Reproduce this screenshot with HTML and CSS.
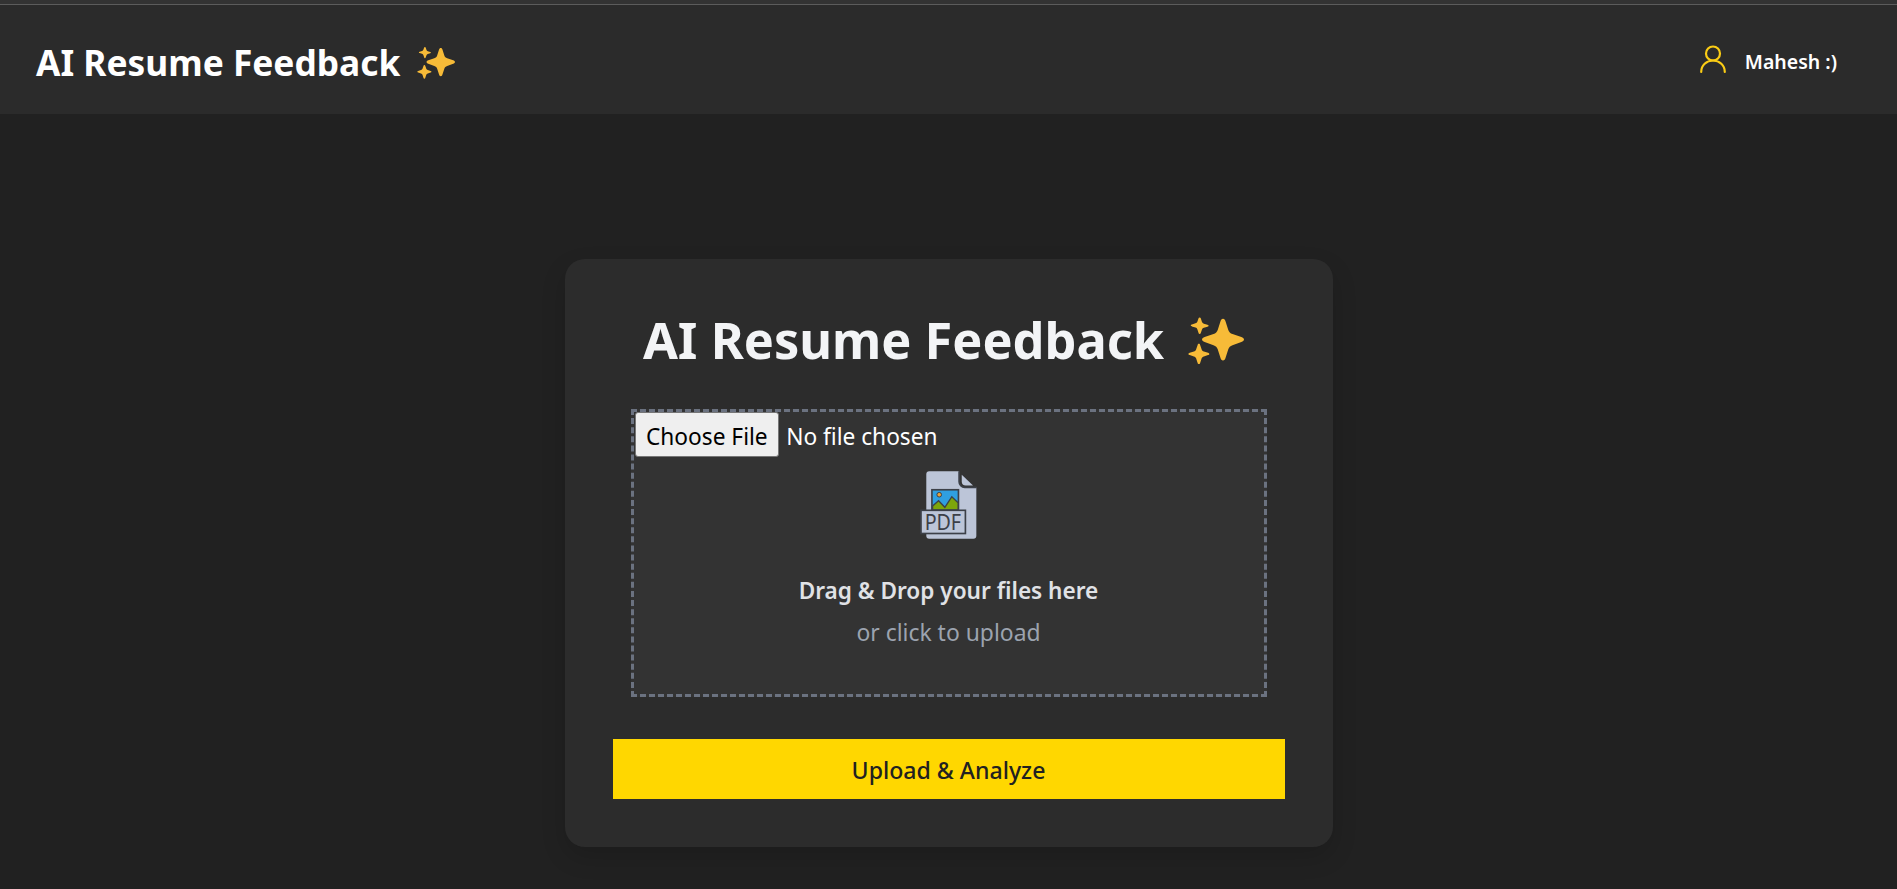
FILE: index.html
```html
<!DOCTYPE html>
<html lang="en">
<head>
  <meta charset="UTF-8" />
  <title>AI Resume Feedback</title>
  <link rel="stylesheet" href="styles.css">
</head>
<body>
  <div class="top-strip"></div>

  <nav class="navbar">
    <div class="brand">
      <span>AI Resume Feedback</span>
      <svg class="sparkle sparkle-small" viewBox="0 0 36 36" preserveAspectRatio="none"><use href="#sparkles" /></svg>
    </div>
    <div class="user">
      <svg class="user-icon" viewBox="0 0 26 28" fill="none" stroke="#facc15" stroke-width="2.2" stroke-linecap="round">
        <circle cx="13" cy="8.5" r="7" />
        <path d="M1.2 27c0-6.500 5.300-11.500 11.800-11.500S24.800 20.500 24.800 27" />
      </svg>
      <span>Mahesh :)</span>
    </div>
  </nav>

  <main class="content">
    <section class="card">
      <h1>
        <span>AI Resume Feedback</span>
        <svg class="sparkle sparkle-big" viewBox="0 0 36 36" preserveAspectRatio="none">
          <g id="sparkles" fill="#f7bb38">
            <path d="M22.500 2c.9 0 1.300.7 1.600 1.700l1.800 6.300c.4 1.400 1.300 2.400 2.700 2.900l5.700 2.300c.9.400 1.700.9 1.700 1.800s-.8 1.400-1.700 1.800l-5.700 2.300c-1.400.5-2.300 1.500-2.700 2.900l-1.800 6.300c-.3 1-.7 1.700-1.600 1.700s-1.300-.7-1.600-1.700l-1.800-6.300c-.4-1.400-1.300-2.400-2.700-2.900l-5.700-2.300c-.9-.4-1.700-.9-1.700-1.800s.8-1.400 1.700-1.800l5.700-2.300c1.400-.5 2.300-1.500 2.700-2.900l1.800-6.300c.3-1 .7-1.700 1.600-1.700z" />
            <path d="M7.500 1c.4 0 .6.300.7.700l.8 2.600c.2.600.6 1 1.200 1.200l2.300.8c.4.100.7.300.7.700s-.3.600-.7.700l-2.300.8c-.6.200-1 .6-1.200 1.200l-.8 2.600c-.1.400-.3.700-.7.700s-.6-.3-.7-.7L6 9.500c-.2-.6-.6-1-1.200-1.200l-2.300-.8c-.4-.1-.7-.3-.7-.7s.3-.6.7-.7l2.300-.8C5.400 5.100 5.800 4.700 6 4.100l.8-2.400c.1-.4.3-.7.700-.7z" />
            <path d="M7 20c.5 0 .7.400.8.800l1 3.300c.2.700.7 1.200 1.400 1.400l2.700 1c.5.200.8.400.8.800s-.3.700-.8.800l-2.700 1c-.7.200-1.200.7-1.400 1.400l-1 3.300c-.1.400-.3.800-.8.800s-.7-.4-.8-.8l-1-3.300c-.2-.7-.7-1.200-1.400-1.400l-2.700-1c-.5-.1-.8-.4-.8-.8s.3-.6.8-.8l2.700-1c.7-.2 1.200-.7 1.400-1.400l1-3.300c.1-.4.300-.8.800-.8z" />
          </g>
        </svg>
      </h1>

      <div class="dropzone">
        <input class="file-input" type="file" />
        <div class="drop-body">
          <svg class="pdf-icon" viewBox="90 60 172 210">
            <path d="M118 63H208V95a17 17 0 0 0 17 17H260V258a9 9 0 0 1-9 9H118a9 9 0 0 1-9-9V72a9 9 0 0 1 9-9z" fill="#bcc5d8" />
            <path d="M216 74L250 106H228a12 12 0 0 1-12-12z" fill="#bcc5d8" />
            <path d="M208 63V95a17 17 0 0 0 17 17H260" fill="none" stroke="#3c4048" stroke-width="5" />
            <rect x="126" y="119" width="80" height="62" fill="#2f9fe0" stroke="#3c4048" stroke-width="5" />
            <path d="M128 168l18-16 19 20 21-32 19 18v22h-77z" fill="#7da60a" stroke="#3c4048" stroke-width="4" />
            <circle cx="148" cy="134" r="7" fill="#e6a23c" stroke="#3c4048" stroke-width="3" />
            <rect x="93" y="181" width="134" height="70" fill="#bcc5d8" stroke="#3c4048" stroke-width="5" />
            <text class="pdf-text" x="104" y="240" textLength="110" lengthAdjust="spacingAndGlyphs">PDF</text>
          </svg>
          <p class="drop-title">Drag &amp; Drop your files here</p>
          <p class="drop-sub">or click to upload</p>
        </div>
      </div>

      <button class="upload-btn">Upload &amp; Analyze</button>
    </section>
  </main>
</body>
</html>
```

FILE: styles.css
```css
* {
  box-sizing: border-box;
}
html, body {
  height: 100%;
}
body {
  margin: 0;
  overflow: hidden;
  font-family: 'Noto Sans', 'Open Sans', sans-serif;
  background-color: #212121;
  color: #ffffff;
}
.top-strip {
  height: 5px;
  background-color: #333333;
  border-bottom: 1px solid #5c5c5c;
}
.navbar {
  height: 109px;
  padding: 4px 60px 0 36px;
  display: flex;
  align-items: center;
  justify-content: space-between;
  background-color: #2b2b2b;
}
.brand {
  display: flex;
  align-items: center;
  gap: 17px;
  font-size: 35.3px;
  font-weight: 700;
}
.user {
  display: flex;
  align-items: center;
  gap: 19px;
  font-size: 19.5px;
  font-weight: 600;
}
.user-icon {
  width: 26px;
  height: 28px;
  margin-bottom: 6px;
  overflow: visible;
}
.sparkle {
  flex: none;
}
.sparkle-small {
  width: 38px;
  height: 34px;
  margin-top: 2px;
}
.sparkle-big {
  width: 56px;
  height: 50px;
  margin-top: 4px;
}
.content {
  padding-top: 145px;
  display: flex;
  justify-content: center;
}
.card {
  width: 768px;
  height: 588px;
  padding: 0 48px;
  background-color: #2c2c2c;
  border-radius: 20px;
  box-shadow: 0 10px 25px rgba(0, 0, 0, 0.15);
  display: flex;
  flex-direction: column;
  align-items: center;
}
h1 {
  margin: 50px 10px 0 0;
  height: 60px;
  display: flex;
  align-items: center;
  gap: 24px;
  font-size: 50.5px;
  font-weight: 700;
  color: #f3f4f6;
}
.dropzone {
  width: 636px;
  height: 288px;
  margin-top: 40px;
  padding: 0 1px;
  border: 3px dashed #6b7280;
  background-color: #333333;
}
.file-input {
  display: block;
  color: #ffffff;
  font-family: inherit;
  font-size: 22.7px;
}
.file-input::file-selector-button {
  height: 45px;
  padding: 3px 10.5px 0;
  margin-right: 7px;
  font-family: inherit;
  font-size: 22.7px;
  color: #000000;
  background-color: #efefef;
  border: 1px solid #767676;
  border-radius: 3px;
}
.drop-body {
  display: flex;
  flex-direction: column;
  align-items: center;
  margin-top: 13px;
}
.pdf-icon {
  width: 57px;
  height: 70px;
}
.pdf-text {
  font-family: 'Noto Sans', sans-serif;
  font-size: 64px;
  fill: #3c4048;
}
.drop-title {
  margin: 36px 0 0;
  font-size: 22.6px;
  font-weight: 600;
  line-height: 30px;
  color: #e0e2e6;
}
.drop-sub {
  margin: 12px 0 0;
  font-size: 22.9px;
  line-height: 30px;
  color: #9ca3af;
}
.upload-btn {
  width: 672px;
  height: 60px;
  margin-top: 42px;
  padding-top: 2px;
  border: none;
  background-color: #ffd700;
  color: #212121;
  font-family: inherit;
  font-size: 23.1px;
  font-weight: 500;
  cursor: pointer;
}
```
